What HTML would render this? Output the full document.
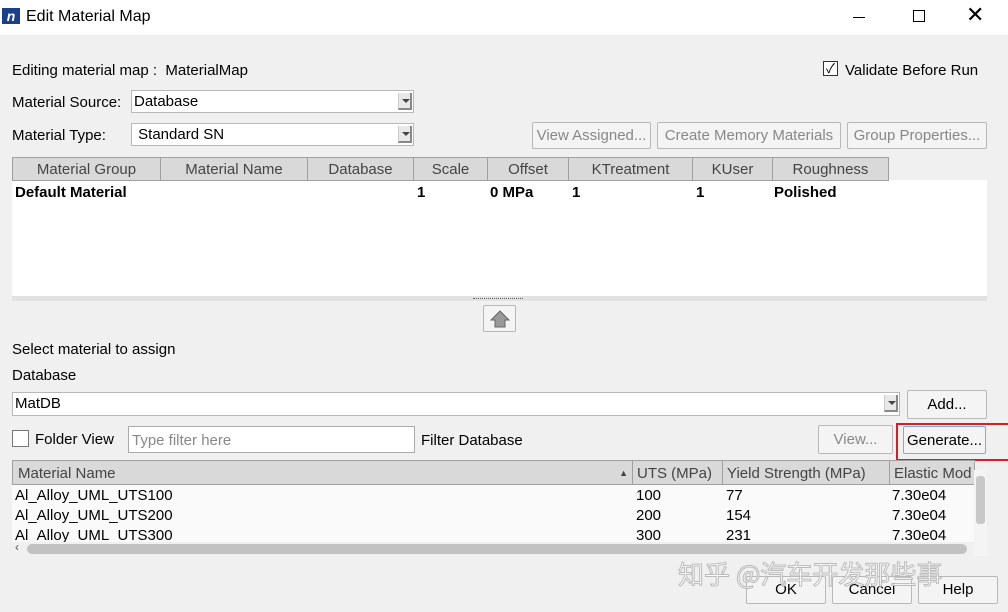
<!DOCTYPE html><html><head><style>
*{box-sizing:border-box;margin:0;padding:0}
body{width:1008px;height:612px;background:#f0f0f0;font-family:"Liberation Sans","Noto Sans CJK SC",sans-serif;font-size:15px;color:#000;position:relative;overflow:hidden}
.a{position:absolute;white-space:nowrap}
.combo{position:absolute;background:#fff;border:1px solid #b8b8b8;padding-left:2px;line-height:22px}
.combo .ar{position:absolute;right:1px;top:2px;width:14px;height:17px;background:#e8e8e8;border-left:1px solid #ccc;border-bottom:2px solid #888;border-right:2px solid #888}
.combo .ar:after{content:"";position:absolute;left:3px;top:6px;border:4px solid transparent;border-top:4px solid #444}
.btn{position:absolute;background:#f4f4f4;border:1px solid #b8b8b8;border-radius:2px;text-align:center;color:#000}
.dis{color:#888}
.hd{position:absolute;background:#d9d9d9;border:1px solid #a0a0a0;color:#444;text-align:center;line-height:23px}
</style></head><body>
<div class="a" style="left:0;top:0;width:1008px;height:35px;background:#fff"></div>
<div class="a" style="left:2px;top:8px;width:18px;height:16px;background:#1c3f8c;color:#fff;font-weight:bold;font-style:italic;font-size:14px;line-height:16px;text-align:center">n</div>
<div class="a" style="left:26px;top:8px;font-size:16px">Edit Material Map</div>
<div class="a" style="left:853px;top:17px;width:12px;height:1px;background:#000"></div>
<div class="a" style="left:913px;top:10px;width:12px;height:12px;border:1px solid #000"></div>
<div class="a" style="left:966px;top:2px;font-size:22px;font-weight:300">✕</div>

<div class="a" style="left:12px;top:62px">Editing material map :&nbsp;&nbsp;MaterialMap</div>
<div class="a" style="left:823px;top:61px;width:15px;height:15px;border:1px solid #333;background:#fff;font-size:13px;line-height:13px;text-align:center">✓</div>
<div class="a" style="left:845px;top:62px">Validate Before Run</div>
<div class="a" style="left:12px;top:94px">Material Source:</div>
<div class="combo" style="left:131px;top:90px;width:283px;height:23px">Database<div class="ar"></div></div>
<div class="a" style="left:12px;top:127px">Material Type:</div>
<div class="combo" style="left:131px;top:123px;width:283px;height:23px">&nbsp;Standard SN<div class="ar"></div></div>
<div class="btn dis" style="left:532px;top:122px;width:119px;height:27px;line-height:26px">View Assigned...</div>
<div class="btn dis" style="left:657px;top:122px;width:184px;height:27px;line-height:26px">Create Memory Materials</div>
<div class="btn dis" style="left:847px;top:122px;width:140px;height:27px;line-height:26px">Group Properties...</div>

<div class="a" style="left:12px;top:180px;width:975px;height:116px;background:#fff"></div>
<div class="a" style="left:12px;top:296px;width:975px;height:5px;background:#e2e2e2"></div>
<div class="hd" style="left:12px;top:157px;width:149px;height:24px">Material Group</div>
<div class="hd" style="left:160px;top:157px;width:148px;height:24px">Material Name</div>
<div class="hd" style="left:307px;top:157px;width:107px;height:24px">Database</div>
<div class="hd" style="left:413px;top:157px;width:75px;height:24px">Scale</div>
<div class="hd" style="left:487px;top:157px;width:82px;height:24px">Offset</div>
<div class="hd" style="left:568px;top:157px;width:125px;height:24px">KTreatment</div>
<div class="hd" style="left:692px;top:157px;width:81px;height:24px">KUser</div>
<div class="hd" style="left:772px;top:157px;width:117px;height:24px">Roughness</div>
<div class="a" style="left:15px;top:184px;font-weight:bold">Default Material</div>
<div class="a" style="left:417px;top:184px;font-weight:bold">1</div>
<div class="a" style="left:490px;top:184px;font-weight:bold">0 MPa</div>
<div class="a" style="left:572px;top:184px;font-weight:bold">1</div>
<div class="a" style="left:696px;top:184px;font-weight:bold">1</div>
<div class="a" style="left:774px;top:184px;font-weight:bold">Polished</div>
<div class="a" style="left:473px;top:298px;width:50px;height:2px;border-top:1px dotted #555"></div>
<div class="btn" style="left:483px;top:305px;width:33px;height:27px"><svg width="22" height="20" viewBox="0 0 22 20" style="margin-top:3px"><path d="M11 2 L20 11 H16 V18 H6 V11 H2 Z" fill="#999" stroke="#666"/></svg></div>

<div class="a" style="left:12px;top:341px">Select material to assign</div>
<div class="a" style="left:12px;top:367px">Database</div>
<div class="combo" style="left:12px;top:392px;width:888px;height:24px">MatDB<div class="ar"></div></div>
<div class="btn" style="left:907px;top:390px;width:80px;height:29px;line-height:28px">Add...</div>
<div class="a" style="left:12px;top:430px;width:17px;height:17px;border:1px solid #777;background:#fff"></div>
<div class="a" style="left:35px;top:431px">Folder View</div>
<div class="a" style="left:128px;top:426px;width:287px;height:27px;border:1px solid #aaa;background:#fff;color:#888;padding:3px 3px;line-height:21px">Type filter here</div>
<div class="a" style="left:421px;top:432px">Filter Database</div>
<div class="btn dis" style="left:818px;top:425px;width:75px;height:29px;line-height:28px">View...</div>
<div class="btn" style="left:903px;top:426px;width:83px;height:28px;line-height:28px;border-color:#7aaee0">Generate...</div>
<div class="a" style="left:896px;top:423px;width:120px;height:38px;border:2px solid #d42020;border-right:none"></div>

<div class="a" style="left:12px;top:485px;width:962px;height:58px;background:#fafafa"></div>
<div class="hd" style="left:12px;top:460px;width:621px;height:25px;text-align:left;padding-left:5px;line-height:25px">Material Name<span style="position:absolute;right:4px;font-size:9px">▲</span></div>
<div class="hd" style="left:632px;top:460px;width:91px;height:25px;text-align:left;padding-left:4px;line-height:25px">UTS (MPa)</div>
<div class="hd" style="left:722px;top:460px;width:168px;height:25px;text-align:left;padding-left:4px;line-height:25px">Yield Strength (MPa)</div>
<div class="hd" style="left:889px;top:460px;width:86px;height:25px;text-align:left;padding-left:4px;overflow:hidden;line-height:25px">Elastic Mod</div>
<div class="a" style="left:15px;top:486px;line-height:20px">Al_Alloy_UML_UTS100<br>Al_Alloy_UML_UTS200<br>Al_Alloy_UML_UTS300</div>
<div class="a" style="left:636px;top:486px;line-height:20px">100<br>200<br>300</div>
<div class="a" style="left:726px;top:486px;line-height:20px">77<br>154<br>231</div>
<div class="a" style="left:892px;top:486px;line-height:20px">7.30e04<br>7.30e04<br>7.30e04</div>
<div class="a" style="left:12px;top:542px;width:962px;height:16px;background:#f0f0f0"></div>
<div class="a" style="left:27px;top:544px;width:940px;height:10px;background:#c2c2c2;border-radius:5px"></div>
<div class="a" style="left:15px;top:540px;font-size:12px;color:#555">‹</div>
<div class="a" style="left:974px;top:470px;width:13px;height:86px;background:#f4f4f4"></div>
<div class="a" style="left:976px;top:476px;width:9px;height:48px;background:#c8c8c8;border-radius:3px"></div>

<div class="btn" style="left:746px;top:576px;width:80px;height:28px;line-height:26px">OK</div>
<div class="btn" style="left:832px;top:576px;width:80px;height:28px;line-height:26px">Cancel</div>
<div class="btn" style="left:918px;top:576px;width:80px;height:28px;line-height:26px">Help</div>
<div class="a" style="left:678px;top:555px;font-size:26px;color:rgba(255,255,255,.8);-webkit-text-stroke:1px #bbb;font-family:'Noto Sans CJK SC',sans-serif">知乎 @汽车开发那些事</div>
</body></html>
